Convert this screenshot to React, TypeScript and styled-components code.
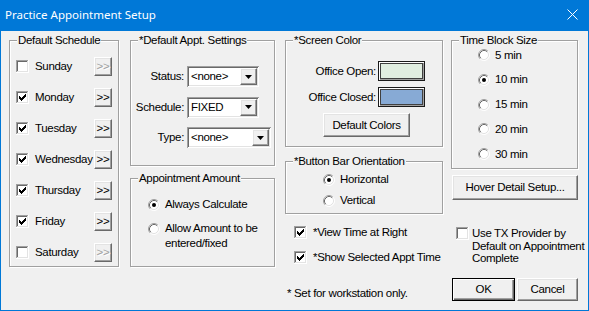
import React from "react";
import styled, { createGlobalStyle, css } from "styled-components";

const FONT = `"Liberation Sans", Arial, sans-serif`;

const GlobalStyle = createGlobalStyle`
  html, body { margin: 0; padding: 0; background: #f0f0f0; }
  body { width: 589px; height: 311px; overflow: hidden; }
  * { box-sizing: border-box; }
  svg { flex-shrink: 0; }
`;

const Window = styled.div`
  width: 589px;
  height: 311px;
  display: flex;
  flex-direction: column;
  background: #f0f0f0;
  border: 1px solid #0078d7;
  border-top: none;
  font-family: ${FONT};
  font-size: 11.5px;
  letter-spacing: -0.33px;
  line-height: 15px;
  color: #000;
`;

const TitleBar = styled.div`
  height: 31px;
  flex: none;
  margin: 0 -1px;
  background: #0078d7;
  color: #fff;
  display: flex;
  align-items: center;
  justify-content: space-between;
  padding: 0 11px 2px 5px;
  font-family: "Segoe UI", "Noto Sans", sans-serif;
  font-size: 11.5px;
  letter-spacing: 0;
`;

const Body = styled.div`
  flex: 1;
  display: flex;
  align-items: stretch;
  padding: 9px 10px 9px 8px;
`;

const Column = styled.div<{ $w: number; $ml?: number }>`
  width: ${(p) => p.$w}px;
  flex: none;
  margin-left: ${(p) => p.$ml ?? 0}px;
  display: flex;
  flex-direction: column;
`;

const Group = styled.div<{ $pad: string; $mt?: number }>`
  position: relative;
  flex: none;
  margin-top: ${(p) => p.$mt ?? 0}px;
  border: 1px solid #a0a0a0;
  box-shadow: 1px 1px 0 #fff, inset 1px 1px 0 #fff;
  padding: ${(p) => p.$pad};
`;

const Legend = styled.span`
  position: absolute;
  top: -8px;
  left: 7px;
  padding: 0 1px;
  background: #f0f0f0;
  line-height: 15px;
  white-space: nowrap;
`;

const StackList = styled.div<{ $gap: number }>`
  display: flex;
  flex-direction: column;
  gap: ${(p) => p.$gap}px;
`;

const ScheduleRow = styled.div`
  display: flex;
  align-items: center;
  height: 19px;
`;

const RowLabel = styled.span<{ $ml: number }>`
  flex: 1;
  min-width: 0;
  margin-left: ${(p) => p.$ml}px;
  white-space: nowrap;
`;

const raised = css`
  background: #f0f0f0;
  border: 1px solid;
  border-color: #fff #696969 #696969 #fff;
  box-shadow: inset -1px -1px 0 #a0a0a0, inset 1px 1px 0 #e3e3e3;
`;

const PushButton = styled.button<{
  $w: number;
  $h: number;
  $default?: boolean;
  $off?: boolean;
  $ml?: number;
}>`
  ${raised};
  width: ${(p) => p.$w}px;
  height: ${(p) => p.$h}px;
  flex: none;
  margin: 0 0 0 ${(p) => p.$ml ?? 0}px;
  padding: 0;
  font-family: ${FONT};
  font-size: 11.5px;
  letter-spacing: -0.33px;
  line-height: 15px;
  color: ${(p) => (p.$off ? "#a0a0a0" : "#000")};
  text-shadow: ${(p) => (p.$off ? "1px 1px 0 #fff" : "none")};
  display: flex;
  align-items: center;
  justify-content: center;
  white-space: nowrap;
  ${(p) =>
    p.$default &&
    css`
      border-color: #000;
      box-shadow: inset 1px 1px 0 #fff, inset -1px -1px 0 #696969,
        inset -2px -2px 0 #a0a0a0;
    `}
`;

const FormGrid = styled.div`
  display: grid;
  grid-template-columns: 48px auto;
  column-gap: 3px;
  row-gap: 9.5px;
  align-items: center;
  justify-items: start;
`;

const FieldLabel = styled.span`
  justify-self: end;
  white-space: nowrap;
`;

const SelectBox = styled.div<{ $w: number }>`
  width: ${(p) => p.$w}px;
  height: 21px;
  display: flex;
  align-items: stretch;
  padding: 2px;
  background: #fff;
  box-shadow: inset 1px 1px 0 #a0a0a0, inset -1px -1px 0 #fff,
    inset 2px 2px 0 #696969, inset -2px -2px 0 #e3e3e3;
`;

const SelectText = styled.span`
  flex: 1;
  display: flex;
  align-items: center;
  padding-left: 2px;
  white-space: nowrap;
`;

const DropButton = styled.span`
  ${raised};
  width: 17px;
  flex: none;
  display: flex;
  align-items: center;
  justify-content: center;
`;

const OptionRow = styled.div<{ $gap: number }>`
  display: flex;
  align-items: flex-start;
  gap: ${(p) => p.$gap}px;
  line-height: 15px;
  white-space: nowrap;
  & > svg {
    margin-top: 1.5px;
  }
`;

const WrapRow = styled.div<{ $gap: number; $ml?: number; $mt?: number }>`
  display: flex;
  align-items: flex-start;
  gap: ${(p) => p.$gap}px;
  margin-left: ${(p) => p.$ml ?? 0}px;
  margin-top: ${(p) => p.$mt ?? 0}px;
  line-height: 12.5px;
  white-space: nowrap;
`;

const CheckRow = styled.div<{ $ml: number; $mt: number }>`
  display: flex;
  align-items: center;
  gap: 6px;
  height: 15px;
  margin-left: ${(p) => p.$ml}px;
  margin-top: ${(p) => p.$mt}px;
  white-space: nowrap;
`;

const ColorGrid = styled.div`
  display: grid;
  grid-template-columns: auto 47px;
  column-gap: 2px;
  row-gap: 6px;
  justify-content: end;
  align-items: center;
  padding-right: 17px;
`;

const Swatch = styled.div<{ $color: string }>`
  width: 47px;
  height: 20px;
  border: 1px solid #1a1a1a;
  padding: 1px;
  background: #f0f0f0;
  box-shadow: inset 1px 1px 0 #fff, inset -1px -1px 0 #a0a0a0;
  & > span {
    display: block;
    width: 100%;
    height: 100%;
    background: ${(p) => p.$color};
    border: 1px solid #404040;
  }
`;

const CenterRow = styled.div<{ $mt: number; $pl: number }>`
  display: flex;
  justify-content: center;
  margin-top: ${(p) => p.$mt}px;
  padding-left: ${(p) => p.$pl}px;
`;

const Footnote = styled.div`
  margin-top: 21px;
  margin-left: 2px;
  white-space: nowrap;
`;

const ButtonRow = styled.div`
  margin-top: auto;
  margin-left: 1px;
  display: flex;
  gap: 2px;
`;

const Spacer = styled.div<{ $h: number }>`
  height: ${(p) => p.$h}px;
  flex: none;
`;

const CHECK_COLS: [number, number][] = [
  [2, 4],
  [3, 5],
  [4, 6],
  [3, 5],
  [2, 4],
  [1, 3],
  [0, 2],
];

function CheckIcon({ checked }: { checked: boolean }) {
  return (
    <svg width="13" height="13" viewBox="0 0 13 13" shapeRendering="crispEdges">
      <rect x="0" y="0" width="13" height="13" fill="#fff" />
      <rect x="0" y="0" width="12" height="1" fill="#a0a0a0" />
      <rect x="0" y="0" width="1" height="12" fill="#a0a0a0" />
      <rect x="0" y="12" width="13" height="1" fill="#fff" />
      <rect x="12" y="0" width="1" height="13" fill="#fff" />
      <rect x="1" y="1" width="10" height="1" fill="#696969" />
      <rect x="1" y="1" width="1" height="10" fill="#696969" />
      <rect x="1" y="11" width="11" height="1" fill="#e3e3e3" />
      <rect x="11" y="1" width="1" height="11" fill="#e3e3e3" />
      {checked &&
        CHECK_COLS.map(([a, b], i) => (
          <rect key={i} x={3 + i} y={3 + a} width="1" height={b - a + 1} fill="#000" />
        ))}
    </svg>
  );
}

function RadioIcon({ checked }: { checked: boolean }) {
  return (
    <svg width="12" height="12" viewBox="0 0 12 12">
      <circle cx="6" cy="6" r="5" fill="#fff" />
      <path d="M2.11 9.89 A5.5 5.5 0 0 1 9.89 2.11" stroke="#a0a0a0" fill="none" />
      <path d="M9.89 2.11 A5.5 5.5 0 0 1 2.11 9.89" stroke="#fff" fill="none" />
      <path d="M2.82 9.18 A4.5 4.5 0 0 1 9.18 2.82" stroke="#696969" fill="none" />
      <path d="M9.18 2.82 A4.5 4.5 0 0 1 2.82 9.18" stroke="#e3e3e3" fill="none" />
      {checked && <circle cx="6" cy="6" r="2" fill="#000" />}
    </svg>
  );
}

function DropArrow() {
  return (
    <svg width="7" height="4" viewBox="0 0 7 4">
      <path d="M0 0h7l-3.5 4z" fill="#000" />
    </svg>
  );
}

function CloseIcon() {
  return (
    <svg width="11" height="11" viewBox="0 0 11 11">
      <path d="M0.5 0.5 L10.5 10.5 M10.5 0.5 L0.5 10.5" stroke="#fff" strokeWidth="1" />
    </svg>
  );
}

const days = [
  { name: "Sunday", on: false },
  { name: "Monday", on: true },
  { name: "Tuesday", on: true },
  { name: "Wednesday", on: true },
  { name: "Thursday", on: true },
  { name: "Friday", on: true },
  { name: "Saturday", on: false },
];

const blocks = ["5 min", "10 min", "15 min", "20 min", "30 min"];

function Select({ w, value }: { w: number; value: string }) {
  return (
    <SelectBox $w={w}>
      <SelectText>{value}</SelectText>
      <DropButton>
        <DropArrow />
      </DropButton>
    </SelectBox>
  );
}

export default function App() {
  return (
    <>
      <GlobalStyle />
      <Window>
        <TitleBar>
          <span>Practice Appointment Setup</span>
          <CloseIcon />
        </TitleBar>
        <Body>
          <Column $w={110}>
            <Group $pad="16px 6px 4px 6px">
              <Legend>Default Schedule</Legend>
              <StackList $gap={12}>
                {days.map((d) => (
                  <ScheduleRow key={d.name}>
                    <CheckIcon checked={d.on} />
                    <RowLabel $ml={6}>{d.name}</RowLabel>
                    <PushButton $w={18} $h={19} $off={!d.on}>
                      &gt;&gt;
                    </PushButton>
                  </ScheduleRow>
                ))}
              </StackList>
            </Group>
          </Column>

          <Column $w={145} $ml={11}>
            <Group $pad="25px 4px 17px 5px">
              <Legend>*Default Appt. Settings</Legend>
              <FormGrid>
                <FieldLabel>Status:</FieldLabel>
                <Select w={72} value="<none>" />
                <FieldLabel>Schedule:</FieldLabel>
                <Select w={72} value="FIXED" />
                <FieldLabel>Type:</FieldLabel>
                <Select w={84} value="<none>" />
              </FormGrid>
            </Group>
            <Group $pad="18px 4px 15px 17px" $mt={12}>
              <Legend>Appointment Amount</Legend>
              <StackList $gap={9}>
                <OptionRow $gap={5}>
                  <RadioIcon checked />
                  <span>Always Calculate</span>
                </OptionRow>
                <OptionRow $gap={5}>
                  <RadioIcon checked={false} />
                  <span>
                    Allow Amount to be
                    <br />
                    entered/fixed
                  </span>
                </OptionRow>
              </StackList>
            </Group>
          </Column>

          <Column $w={158} $ml={10}>
            <Group $pad="20px 0 9px 0">
              <Legend>*Screen Color</Legend>
              <ColorGrid>
                <FieldLabel>Office Open:</FieldLabel>
                <Swatch $color="#e1eee1">
                  <span />
                </Swatch>
                <FieldLabel>Office Closed:</FieldLabel>
                <Swatch $color="#87aad5">
                  <span />
                </Swatch>
              </ColorGrid>
              <CenterRow $mt={6} $pl={5}>
                <PushButton $w={87} $h={24}>
                  Default Colors
                </PushButton>
              </CenterRow>
            </Group>
            <Group $pad="10px 4px 5px 37px" $mt={14}>
              <Legend>*Button Bar Orientation</Legend>
              <StackList $gap={6}>
                <OptionRow $gap={5}>
                  <RadioIcon checked />
                  <span>Horizontal</span>
                </OptionRow>
                <OptionRow $gap={5}>
                  <RadioIcon checked={false} />
                  <span>Vertical</span>
                </OptionRow>
              </StackList>
            </Group>
            <CheckRow $ml={9} $mt={11}>
              <CheckIcon checked />
              <span>*View Time at Right</span>
            </CheckRow>
            <CheckRow $ml={9} $mt={10}>
              <CheckIcon checked />
              <span>*Show Selected Appt Time</span>
            </CheckRow>
            <Footnote>* Set for workstation only.</Footnote>
          </Column>

          <Column $w={127} $ml={8}>
            <Group $pad="6.5px 4px 6.5px 26px">
              <Legend>Time Block Size</Legend>
              <StackList $gap={9.75}>
                {blocks.map((b) => (
                  <OptionRow key={b} $gap={5}>
                    <RadioIcon checked={b === "10 min"} />
                    <span>{b}</span>
                  </OptionRow>
                ))}
              </StackList>
            </Group>
            <Spacer $h={6} />
            <PushButton $w={126} $h={25} $ml={1}>
              Hover Detail Setup...
            </PushButton>
            <WrapRow $gap={3} $ml={5} $mt={27}>
              <CheckIcon checked={false} />
              <span>
                Use TX Provider by
                <br />
                Default on Appointment
                <br />
                Complete
              </span>
            </WrapRow>
            <ButtonRow>
              <PushButton $w={63} $h={23} $default>
                OK
              </PushButton>
              <PushButton $w={61} $h={23}>
                Cancel
              </PushButton>
            </ButtonRow>
          </Column>
        </Body>
      </Window>
    </>
  );
}
